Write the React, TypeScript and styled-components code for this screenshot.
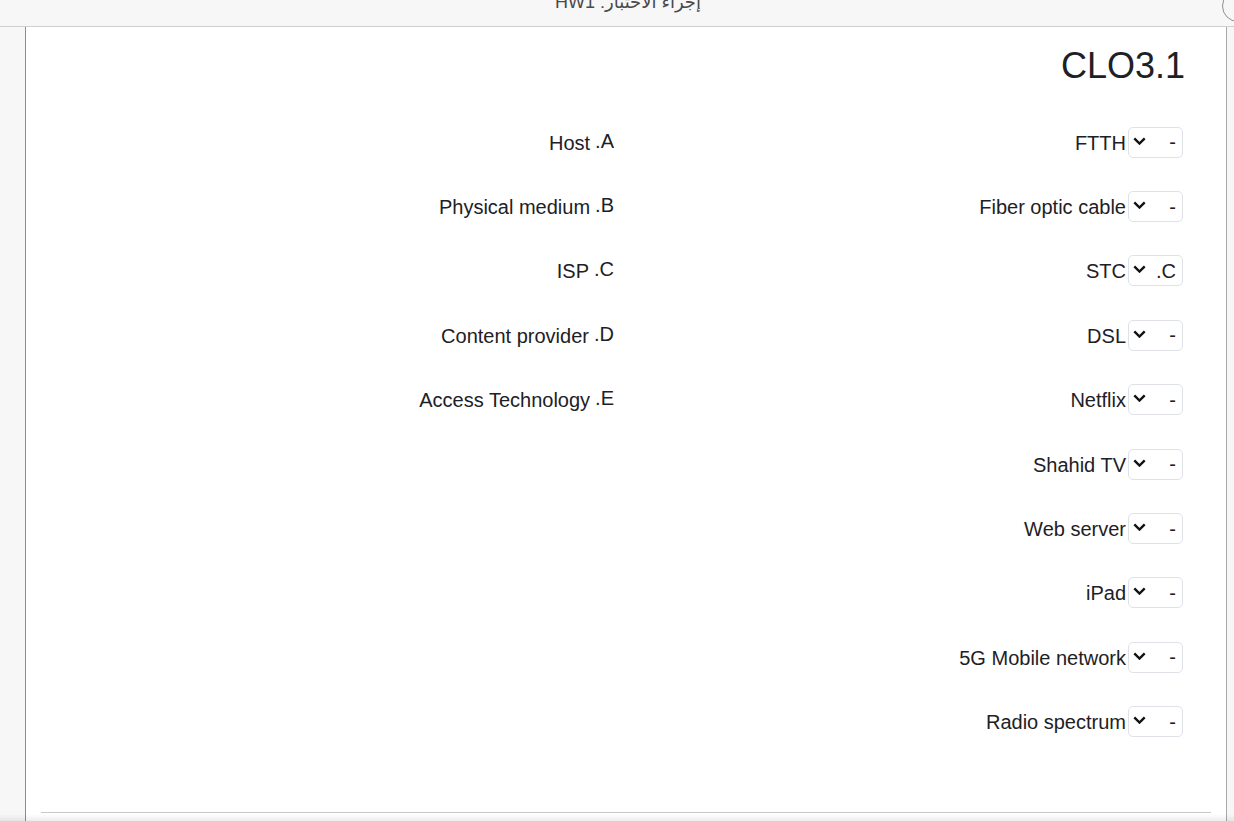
import React from "react";
import styled, { createGlobalStyle } from "styled-components";

const Global = createGlobalStyle`
  html, body { margin: 0; padding: 0; background: #f7f7f7; overflow: hidden; }
  body { font-family: "Liberation Sans", Arial, sans-serif; color: #1d2125; }
  * { box-sizing: border-box; }
`;

const Page = styled.div`
  height: 822px;
  display: flex;
  flex-direction: column;
`;

const TopBar = styled.header`
  position: relative;
  height: 27px;
  flex: none;
  background: #f7f7f7;
  border-bottom: 1px solid #cfcfcf;
  display: flex;
  justify-content: center;
  padding-left: 22px;
  overflow: hidden;
`;

const Title = styled.h1`
  margin: -9px 0 0;
  font-family: "Liberation Sans", "DejaVu Sans", sans-serif;
  font-size: 18px;
  line-height: 22px;
  font-weight: normal;
  color: #4a4a4a;
  direction: rtl;
  white-space: nowrap;
`;

const RoundButton = styled.button`
  position: absolute;
  top: -10px;
  left: 1222px;
  width: 32px;
  height: 32px;
  border-radius: 50%;
  border: 1px solid #8f8f8f;
  background: #f7f7f7;
  padding: 0;
`;

const Panel = styled.main`
  flex: 1;
  margin-left: 25px;
  width: 1202px;
  background: #fff;
  border-left: 1px solid #8c8c8c;
  border-right: 1px solid #a8a8a8;
  padding: 0 15px;
  direction: rtl;
`;

const Question = styled.section`
  padding-right: 26px;
`;

const Heading = styled.h2`
  margin: 17px 0 0;
  font-size: 36px;
  line-height: 43px;
  font-weight: normal;
  color: #1d2125;
  text-align: right;
`;

const MatchGrid = styled.div`
  display: grid;
  grid-template-columns: 571px 1fr;
  grid-template-rows: repeat(10, 64.4px);
  grid-auto-flow: column;
  margin-top: 23px;
`;

const OptionCell = styled.div`
  display: flex;
  align-items: center;
  gap: 2px;
  padding-right: 2px;
`;

const AnswerCell = styled.div`
  display: flex;
  align-items: center;
  gap: 5px;
`;

const ItemText = styled.span`
  font-size: 20px;
  line-height: 23px;
  margin-top: 2px;
  white-space: nowrap;
`;

const Letter = styled.span`
  font-size: 20px;
  line-height: 23px;
  margin-bottom: 2px;
  direction: rtl;
`;

const SelectWrap = styled.div`
  position: relative;
  width: 55px;
  height: 31px;
  flex: none;
`;

const Select = styled.select`
  appearance: none;
  -webkit-appearance: none;
  width: 100%;
  height: 100%;
  border: 1px solid #dee2e6;
  border-radius: 5px;
  background: #fff;
  color: #1d2125;
  font-family: "Liberation Sans", Arial, sans-serif;
  font-size: 20px;
  padding: 0 6px 0 24px;
  direction: rtl;
  text-align: right;
  outline: none;
`;

const Chevron = styled.svg`
  position: absolute;
  left: 5px;
  top: 10px;
  width: 13px;
  height: 8px;
  pointer-events: none;
`;

const Rule = styled.hr`
  border: 0;
  border-top: 1px solid #c8c8c8;
  margin: 58px 0 0;
`;

const BottomShade = styled.div`
  position: fixed;
  left: 0;
  right: 0;
  bottom: 0;
  height: 8px;
  background: linear-gradient(to bottom, rgba(0, 0, 0, 0), rgba(0, 0, 0, 0.07));
  border-bottom: 1px solid #d4d4d4;
  pointer-events: none;
`;

const options: { label: string; value: string }[] = [
  { label: "FTTH", value: "-" },
  { label: "Fiber optic cable", value: "-" },
  { label: "STC", value: "C." },
  { label: "DSL", value: "-" },
  { label: "Netflix", value: "-" },
  { label: "Shahid TV", value: "-" },
  { label: "Web server", value: "-" },
  { label: "iPad", value: "-" },
  { label: "5G Mobile network", value: "-" },
  { label: "Radio spectrum", value: "-" },
];

const answers: { letter: string; text: string }[] = [
  { letter: "A.", text: "Host" },
  { letter: "B.", text: "Physical medium" },
  { letter: "C.", text: "ISP" },
  { letter: "D.", text: "Content provider" },
  { letter: "E.", text: "Access Technology" },
];

const choiceValues = ["-", "A.", "B.", "C.", "D.", "E."];

export default function App() {
  return (
    <>
      <Global />
      <Page>
        <TopBar>
          <Title>إجراء الاختبار: HW1</Title>
          <RoundButton aria-label="menu" />
        </TopBar>
        <Panel>
          <Question>
            <Heading>CLO3.1</Heading>
            <MatchGrid>
              {options.map((o) => (
                <OptionCell key={o.label}>
                  <SelectWrap>
                    <Select defaultValue={o.value}>
                      {choiceValues.map((c) => (
                        <option key={c} value={c}>
                          {c}
                        </option>
                      ))}
                    </Select>
                    <Chevron viewBox="0 0 13 8">
                      <path
                        d="M1.3 1.3 L6.5 6.5 L11.7 1.3"
                        fill="none"
                        stroke="#111"
                        strokeWidth="2.4"
                      />
                    </Chevron>
                  </SelectWrap>
                  <ItemText>{o.label}</ItemText>
                </OptionCell>
              ))}
              {answers.map((a) => (
                <AnswerCell key={a.letter}>
                  <Letter>{a.letter}</Letter>
                  <ItemText>{a.text}</ItemText>
                </AnswerCell>
              ))}
            </MatchGrid>
          </Question>
          <Rule />
        </Panel>
        <BottomShade />
      </Page>
    </>
  );
}
